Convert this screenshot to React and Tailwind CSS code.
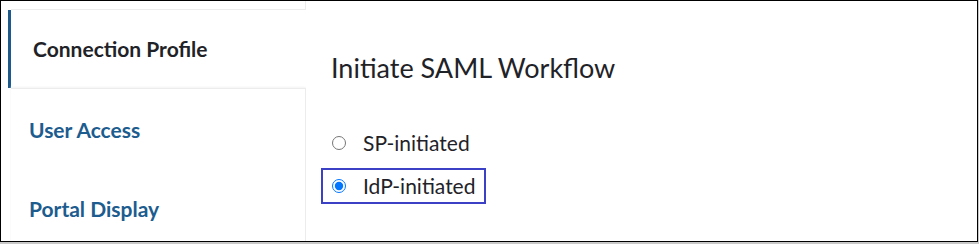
import React from 'react'

const font = { fontFamily: 'Lato, "Noto Sans", sans-serif' }

const App = () => {
  return (
    <div className="w-[979px] h-[244px] bg-white" style={font}>
      <div className="w-[978px] h-[242px] border border-black shadow-[1px_1px_0_1px_#c8c8c8] flex overflow-hidden">
        {/* sidebar */}
        <div className="w-[305px] pl-[7px] flex flex-col shrink-0 overflow-hidden">
          <div className="h-[9px] shrink-0 border-b border-r border-[#ececec] ml-[3px]"></div>
          <div className="h-[78px] shrink-0 border-l-[3px] border-[#1c5a8c] flex items-center pl-[22px] text-[21px] font-bold text-[#1f2328]">
            Connection Profile
          </div>
          <div className="shrink-0 ml-[3px] border-t border-r border-[#ececec] shadow-[0_-1px_2px_#f3f3f3] flex flex-col pl-[18px] text-[21px] font-bold text-[#1d5c8e]">
            <div className="h-[82px] shrink-0 flex items-center">User Access</div>
            <div className="h-[76px] shrink-0 flex items-center">Portal Display</div>
          </div>
        </div>

        {/* content */}
        <div className="flex-1 pl-[25px] pt-[49px]">
          <h1 className="text-[27px] leading-[36px] text-[#1f2328]">Initiate SAML Workflow</h1>
          <div className="mt-[43px] flex flex-col">
            <label className="flex items-center gap-[17px] h-[28px] text-[21px] text-[#1f2328]">
              <input type="radio" name="wf" className="w-[14px] h-[14px] m-0 ml-[1px]" />
              SP-initiated
            </label>
            <label className="mt-[11px] -ml-[10px] w-[165px] h-[36px] border-2 border-[#3b40c4] flex items-center gap-[17px] pl-[9px] text-[21px] text-[#1f2328]">
              <input type="radio" name="wf" defaultChecked className="w-[14px] h-[14px] m-0 accent-[#0075ff]" />
              IdP-initiated
            </label>
          </div>
        </div>
      </div>
    </div>
  )
}

export default App
